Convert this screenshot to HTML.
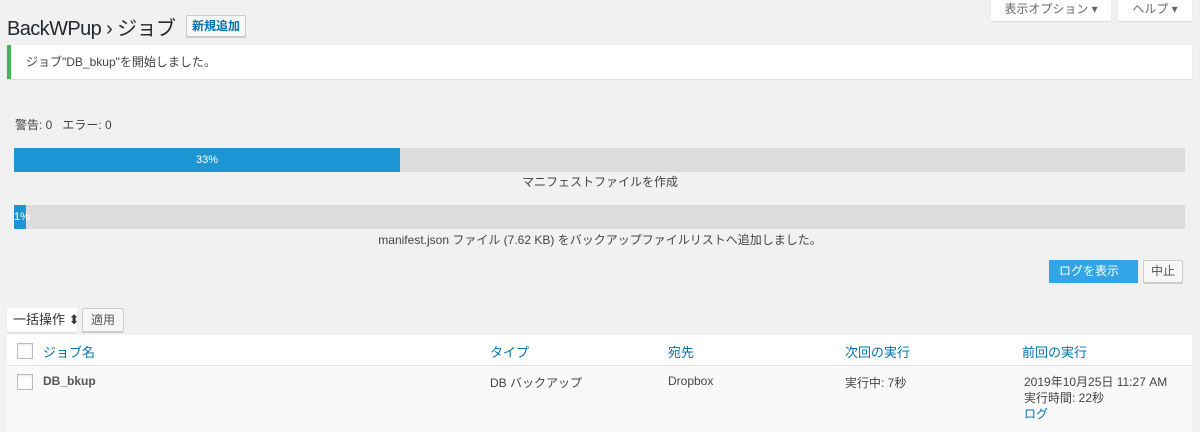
<!DOCTYPE html>
<html><head><meta charset="utf-8"><style>
*{box-sizing:border-box;margin:0;padding:0}
body{width:1200px;height:432px;background:#f1f1f1;font-family:"Liberation Sans","Noto Sans CJK JP",sans-serif;font-size:12px;color:#444;position:relative;overflow:hidden}
.a{position:absolute;white-space:nowrap}
.btn{position:absolute;border:1px solid #ccc;background:#f7f7f7;border-radius:2px;box-shadow:0 1px 0 #ccc;text-align:center;color:#555}
.bar{position:absolute;left:14px;width:1171px;height:24px;background:#dcdcdc}
.fill{position:absolute;left:0;top:0;height:24px;background:#1e95d3;color:#fff;text-align:center;line-height:24px;font-size:11px}
.cb{position:absolute;width:16px;height:16px;border:1px solid #bbb;background:#fff;box-shadow:inset 0 1px 2px rgba(0,0,0,.1)}
.h{color:#0073aa;font-size:13px}
</style></head><body>
<div class="a" style="left:7px;top:12px;font-size:20px;letter-spacing:-0.6px;color:#23282d">BackWPup › ジョブ</div>
<div class="btn" style="left:186px;top:15px;width:60px;height:22px;line-height:20px;color:#0073aa;font-weight:bold;font-size:12px">新規追加</div>
<div class="a" style="left:991px;top:-1px;width:120px;height:22px;background:#fff;box-shadow:0 1px 1px rgba(0,0,0,.1);text-align:center;line-height:20px;color:#666">表示オプション ▾</div>
<div class="a" style="left:1118px;top:-1px;width:74px;height:22px;background:#fff;box-shadow:0 1px 1px rgba(0,0,0,.1);text-align:center;line-height:20px;color:#666">ヘルプ ▾</div>
<div class="a" style="left:7px;top:45px;width:1185px;height:34px;background:#fff;border-left:4px solid #46b450;box-shadow:0 1px 1px rgba(0,0,0,.1);padding-left:15px;line-height:34px;font-size:12px">ジョブ"DB_bkup"を開始しました。</div>
<div class="a" style="left:15px;top:116px">警告: 0 &nbsp;&nbsp;エラー: 0</div>
<div class="bar" style="top:148px"><div class="fill" style="width:386px">33%</div></div>
<div class="a" style="left:0;width:1200px;text-align:center;top:173px">マニフェストファイルを作成</div>
<div class="bar" style="top:205px"><div class="fill" style="width:12px;overflow:visible">1%</div></div>
<div class="a" style="left:0;width:1200px;text-align:center;top:231px">manifest.json ファイル (7.62 KB) をバックアップファイルリストへ追加しました。</div>
<div class="a" style="left:1049px;top:260px;width:89px;height:23px;background:#33a5e6;color:#fff;line-height:22px;padding-left:10px">ログを表示</div>
<div class="btn" style="left:1143px;top:260px;width:40px;height:23px;line-height:21px">中止</div>
<div class="a" style="left:7px;top:308px;width:70px;height:24px;background:#fff;border-radius:2px;box-shadow:0 1px 1px rgba(0,0,0,.1);line-height:24px;padding-left:6px;color:#333;font-size:13px">一括操作 ⬍</div>
<div class="btn" style="left:82px;top:308px;width:42px;height:24px;line-height:22px">適用</div>
<div class="a" style="left:7px;top:335px;width:1185px;height:31px;background:#fff;border-bottom:1px solid #e1e1e1"></div>
<div class="a" style="left:7px;top:366px;width:1185px;height:66px;background:#f9f9f9"></div>
<div class="cb" style="left:17px;top:343px"></div>
<div class="cb" style="left:17px;top:374px"></div>
<div class="a h" style="left:43px;top:342px">ジョブ名</div>
<div class="a h" style="left:490px;top:342px">タイプ</div>
<div class="a h" style="left:668px;top:342px">宛先</div>
<div class="a h" style="left:845px;top:342px">次回の実行</div>
<div class="a h" style="left:1022px;top:342px">前回の実行</div>
<div class="a" style="left:43px;top:374px;font-weight:bold;color:#555">DB_bkup</div>
<div class="a" style="left:490px;top:374px">DB バックアップ</div>
<div class="a" style="left:668px;top:374px">Dropbox</div>
<div class="a" style="left:845px;top:374px">実行中: 7秒</div>
<div class="a" style="left:1024px;top:374px;line-height:16px">2019年10月25日 11:27 AM<br>実行時間: 22秒<br><span style="color:#0073aa">ログ</span></div>
</body></html>
